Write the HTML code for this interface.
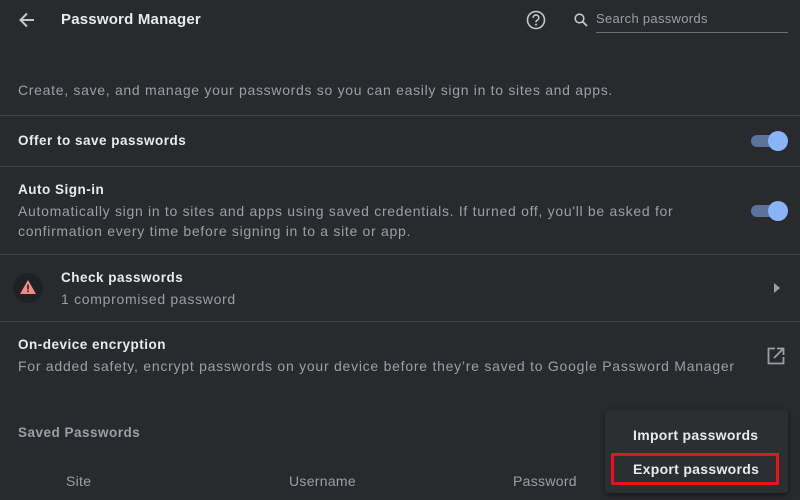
<!DOCTYPE html>
<html><head><meta charset="utf-8"><style>
*{margin:0;padding:0;box-sizing:border-box}
body{width:800px;height:500px;background:#292a2d;font-family:"Liberation Sans",sans-serif;color:#e8eaed;position:relative;overflow:hidden;font-size:14px}
.a{position:absolute;white-space:nowrap}
.s{color:#9aa0a6;letter-spacing:0.7px}
.h{font-weight:bold;font-size:13.5px;letter-spacing:0.5px}
.hr{position:absolute;left:0;width:800px;height:1px;background:#3f4043}
.tg{position:absolute;left:751px;width:36px;height:12px;border-radius:6px;background:#5d729c}
.tg:after{content:"";position:absolute;right:-1px;top:-4px;width:20px;height:20px;border-radius:50%;background:#8ab4f8}
</style></head><body>
<svg class="a" style="left:17px;top:10px" width="20" height="20" viewBox="0 0 20 20"><path d="M17 10H4M10 3.5L3.5 10 10 16.5" stroke="#c4c7c5" stroke-width="2" fill="none"/></svg>
<div class="a" style="left:61px;top:11px;font-size:15px;font-weight:bold;letter-spacing:0.2px">Password Manager</div>
<svg class="a" style="left:525px;top:9px" width="22" height="22" viewBox="0 0 22 22"><circle cx="11" cy="11" r="8.5" stroke="#c4c7c5" stroke-width="1.6" fill="none"/><path d="M8.2 8.8a2.8 2.8 0 1 1 3.9 2.5c-.8.4-1.1.9-1.1 1.9" stroke="#c4c7c5" stroke-width="1.6" fill="none"/><circle cx="11" cy="15.6" r="1" fill="#c4c7c5"/></svg>
<svg class="a" style="left:573px;top:12px" width="16" height="16" viewBox="0 0 16 16"><circle cx="6.5" cy="6.5" r="4.3" stroke="#c4c7c5" stroke-width="1.6" fill="none"/><path d="M9.7 9.7L14 14" stroke="#c4c7c5" stroke-width="1.8"/></svg>
<div class="a s" style="left:596px;top:11px;font-size:13px;letter-spacing:0.3px">Search passwords</div>
<div class="a" style="left:596px;top:32px;width:192px;height:1px;background:#6b6e72"></div>
<div class="a s" style="left:18px;top:82px">Create, save, and manage your passwords so you can easily sign in to sites and apps.</div>
<div class="hr" style="top:115px"></div>
<div class="a h" style="left:18px;top:133px">Offer to save passwords</div>
<div class="tg" style="top:135px"></div>
<div class="hr" style="top:166px"></div>
<div class="a h" style="left:18px;top:182px">Auto Sign-in</div>
<div class="a s" style="left:18px;top:203px">Automatically sign in to sites and apps using saved credentials. If turned off, you'll be asked for</div>
<div class="a s" style="left:18px;top:223px">confirmation every time before signing in to a site or app.</div>
<div class="tg" style="top:205px"></div>
<div class="hr" style="top:254px"></div>
<div class="a" style="left:13px;top:273px;width:30px;height:30px;border-radius:50%;background:#202124"></div>
<svg class="a" style="left:19px;top:279px" width="18" height="16" viewBox="0 0 18 16"><path d="M9 1L17 15H1Z" fill="#f28b82"/><rect x="8.2" y="5.5" width="1.6" height="5" fill="#202124"/><rect x="8.2" y="11.5" width="1.6" height="1.6" fill="#202124"/></svg>
<div class="a h" style="left:61px;top:270px">Check passwords</div>
<div class="a s" style="left:61px;top:291px">1 compromised password</div>
<svg class="a" style="left:773px;top:283px" width="8" height="10" viewBox="0 0 8 10"><path d="M1 0L7 5 1 10Z" fill="#9aa0a6"/></svg>
<div class="hr" style="top:321px"></div>
<div class="a h" style="left:18px;top:337px">On-device encryption</div>
<div class="a s" style="left:18px;top:358px;letter-spacing:0.75px">For added safety, encrypt passwords on your device before they’re saved to Google Password Manager</div>
<svg class="a" style="left:766px;top:346px" width="20" height="20" viewBox="0 0 20 20"><path d="M9 2.5H2.5V17.5H17.5V11" stroke="#9aa0a6" stroke-width="1.8" fill="none"/><path d="M11 2.5H17.5V9M17.5 2.5L8 12" stroke="#9aa0a6" stroke-width="1.8" fill="none"/></svg>
<div class="a h" style="left:18px;top:425px;color:#9aa0a6">Saved Passwords</div>
<div class="a s" style="left:66px;top:473px;letter-spacing:0.3px">Site</div>
<div class="a s" style="left:289px;top:473px;letter-spacing:0.3px">Username</div>
<div class="a s" style="left:513px;top:473px;letter-spacing:0.3px">Password</div>
<div class="a" style="left:605px;top:410px;width:183px;height:83px;background:#2d2e31;border-radius:4px;box-shadow:0 2px 6px rgba(0,0,0,.5)"></div>
<div class="a h" style="left:633px;top:427px;font-size:14px;letter-spacing:0.3px">Import passwords</div>
<div class="a" style="left:611px;top:453px;width:168px;height:32px;border:3px solid #e8121c"></div>
<div class="a h" style="left:633px;top:461px;font-size:14px;letter-spacing:0.3px">Export passwords</div>
</body></html>
